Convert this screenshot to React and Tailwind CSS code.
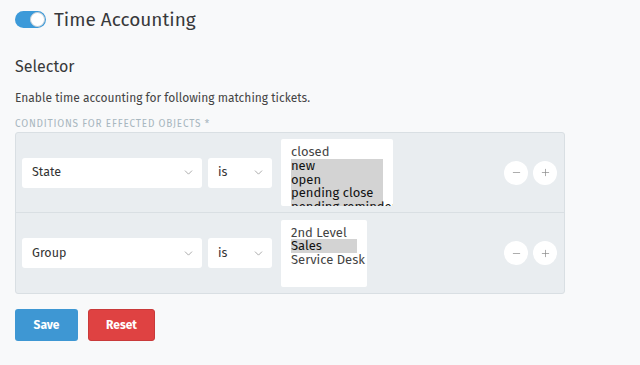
import { ChevronDown, Minus, Plus } from 'lucide-react';

const font = { fontFamily: '"Fira Sans", "Open Sans", "Liberation Sans", sans-serif' };

function Select({ label, width }) {
  return (
    <div className={`flex h-[30px] ${width} items-center justify-between rounded-[3px] bg-white pl-[10px] pr-[7px] text-[12.5px] text-[#333]`}>
      <span>{label}</span>
      <ChevronDown className="h-[13px] w-[13px] text-[#999]" strokeWidth={1.5} />
    </div>
  );
}

function ListBox({ items, selected, width }) {
  return (
    <div className={`h-[67px] ${width} overflow-hidden whitespace-nowrap rounded-[2px] bg-white px-[10px] pt-[6px] text-[13px] leading-[13.8px] text-[#444]`}>
      {items.map((item) => (
        <div
          key={item}
          className={selected.includes(item) ? 'bg-[#d3d3d3] text-[#111]' : ''}
        >
          {item}
        </div>
      ))}
    </div>
  );
}

function RowButtons() {
  return (
    <div className="ml-auto flex gap-[5px] pr-[1px]">
      <div className="flex h-[24px] w-[24px] items-center justify-center rounded-full bg-white">
        <Minus className="h-[11px] w-[11px] text-[#888]" strokeWidth={1.5} />
      </div>
      <div className="flex h-[24px] w-[24px] items-center justify-center rounded-full bg-white">
        <Plus className="h-[11px] w-[11px] text-[#888]" strokeWidth={1.5} />
      </div>
    </div>
  );
}

function ConditionRow({ attr, items, selected, listWidth, border }) {
  return (
    <div className={`flex h-[80px] items-center px-[6px] ${border ? 'border-b border-[#d9dfe3]' : ''}`}>
      <Select label={attr} width="w-[180px]" />
      <div className="w-[6px]" />
      <Select label="is" width="w-[64px]" />
      <div className="w-[9px]" />
      <ListBox items={items} selected={selected} width={listWidth} />
      <RowButtons />
    </div>
  );
}

export default function App() {
  return (
    <div className="min-h-[365px] w-[640px] bg-[#f8f9fa] px-[15px] pt-[10px]" style={font}>
      {/* header */}
      <div className="flex items-center gap-[8px]">
        <div className="relative h-[17px] w-[31px] rounded-full bg-[#3c9ad9]">
          <div className="absolute right-[1px] top-[1px] h-[15px] w-[15px] rounded-full border border-[#c8d0d6] bg-white" />
        </div>
        <h1 className="text-[19px] leading-[19px] text-[#38393b]">Time Accounting</h1>
      </div>

      <h2 className="mt-[28px] text-[16px] leading-[20px] text-[#38393b]">Selector</h2>

      <p className="mt-[14px] text-[12px] leading-[14px] text-[#444]">
        Enable time accounting for following matching tickets.
      </p>

      <div className="mt-[13px] text-[10px] leading-[12px] uppercase tracking-[0.08em] text-[#a8b7bf]">
        Conditions for effected objects *
      </div>

      <div className="mt-[2px] w-[550px] rounded-[3px] border border-[#d9dfe3] bg-[#e9edf0]">
        <ConditionRow
          attr="State"
          items={['closed', 'new', 'open', 'pending close', 'pending reminder']}
          selected={['new', 'open', 'pending close', 'pending reminder']}
          listWidth="w-[112px]"
          border
        />
        <ConditionRow
          attr="Group"
          items={['2nd Level', 'Sales', 'Service Desk']}
          selected={['Sales']}
          listWidth="w-[86px]"
        />
      </div>

      <div className="mt-[15px] flex gap-[10px]">
        <button className="h-[32px] w-[63px] rounded-[3px] bg-[#3e97d3] text-[12px] font-bold text-white">
          Save
        </button>
        <button className="h-[32px] w-[67px] rounded-[3px] border border-[#c93a3a] bg-[#df4242] text-[12px] font-bold text-white">
          Reset
        </button>
      </div>
    </div>
  );
}
